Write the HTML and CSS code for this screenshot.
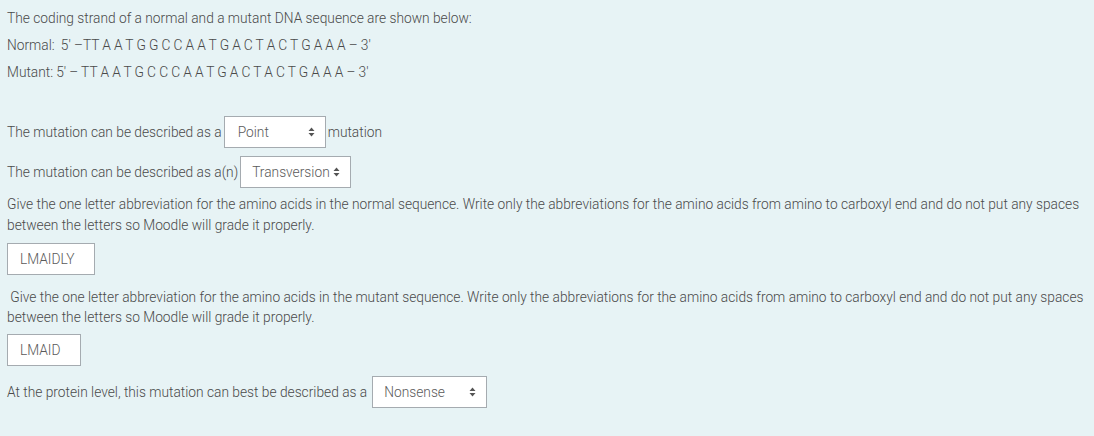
FILE: index.html
```html
<!DOCTYPE html>
<html>
<head>
<meta charset="utf-8">
<link rel="stylesheet" href="styles.css">
</head>
<body>
<div class="question">
  <p class="intro">The coding strand of a normal and a mutant DNA sequence are shown below:</p>
  <p class="seq">Normal:&nbsp; 5′ –TT A A T G G C C A A T G A C T A C T G A A A – 3′</p>
  <p class="seq seq-last">Mutant: 5′ – TT A A T G C C C A A T G A C T A C T G A A A – 3′</p>

  <div class="row row-first">
    <span>The mutation can be described as a</span>
    <div class="select sel-point"><span>Point</span><svg class="arrows" width="7" height="10" viewBox="0 0 7 10"><path d="M3.5 0.5 L6.5 4 H0.5 Z M3.5 9.5 L6.5 6 H0.5 Z" fill="#555"/></svg></div>
    <span>mutation</span>
  </div>

  <div class="row">
    <span>The mutation can be described as a(n)</span>
    <div class="select sel-trans"><span>Transversion</span><svg class="arrows" width="7" height="10" viewBox="0 0 7 10"><path d="M3.5 0.5 L6.5 4 H0.5 Z M3.5 9.5 L6.5 6 H0.5 Z" fill="#555"/></svg></div>
  </div>

  <p class="para">Give the one letter abbreviation for the amino acids in the normal sequence. Write only the abbreviations for the amino acids from amino to carboxyl end and do not put any spaces between the letters so Moodle will grade it properly.</p>
  <div class="input inp-normal">LMAIDLY</div>

  <p class="para para2">&nbsp;Give the one letter abbreviation for the amino acids in the mutant sequence. Write only the abbreviations for the amino acids from amino to carboxyl end and do not put any spaces between the letters so Moodle will grade it properly.</p>
  <div class="input inp-mutant">LMAID</div>

  <div class="row row-last">
    <span>At the protein level, this mutation can best be described as a</span>
    <div class="select sel-non"><span>Nonsense</span><svg class="arrows" width="7" height="10" viewBox="0 0 7 10"><path d="M3.5 0.5 L6.5 4 H0.5 Z M3.5 9.5 L6.5 6 H0.5 Z" fill="#555"/></svg></div>
  </div>
</div>
</body>
</html>
```

FILE: styles.css
```css
html, body {
  margin: 0;
  padding: 0;
  background: #e7f3f5;
}
body {
  font-family: Roboto, "Noto Sans", "Liberation Sans", sans-serif;
  font-size: 13.75px;
  font-weight: 300;
  color: #4a4a4a;
}
.question {
  padding: 8px 7px 20px 7px;
}
p {
  margin: 0;
}
.intro, .seq {
  line-height: 20px;
  margin-bottom: 7px;
}
.seq {
  word-spacing: -0.25px;
}
.seq-last {
  margin-bottom: 0;
}
.row {
  display: flex;
  align-items: center;
  gap: 2px;
  height: 32px;
  margin-top: 8px;
}
.row-first {
  margin-top: 34px;
}
.row-last {
  margin-top: 10px;
}
.row-last .select {
  margin-left: 3px;
}
.select {
  box-sizing: border-box;
  height: 32px;
  border: 1px solid #a5abb0;
  background: #fff;
  display: flex;
  align-items: center;
  justify-content: space-between;
  padding: 0 10px 0 13px;
  color: #5a5a5a;
}
.sel-point { width: 102px; }
.sel-trans { width: 111px; padding-left: 11px; }
.sel-non { width: 115px; padding-left: 11px; }
.arrows {
  display: block;
}
.para {
  line-height: 21px;
  margin-top: 6px;
}
.para2 {
  margin-top: 12px;
  line-height: 20px;
}
.input {
  box-sizing: border-box;
  height: 32px;
  border: 1px solid #a5abb0;
  background: #fff;
  display: flex;
  align-items: center;
  padding-left: 12px;
  margin-top: 7px;
  color: #5a5a5a;
}
.inp-normal { width: 88px; }
.inp-mutant { width: 74px; }
```
